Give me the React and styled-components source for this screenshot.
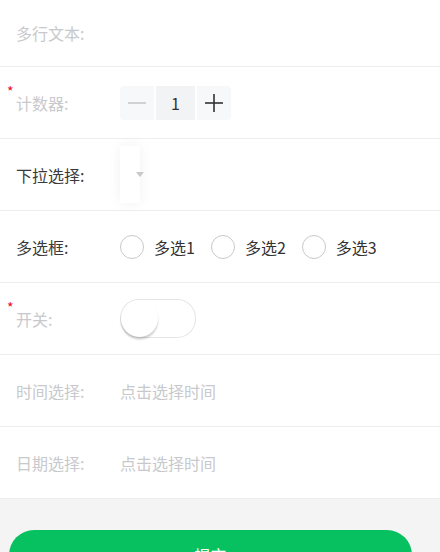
import React, { useState } from 'react';
import styled, { createGlobalStyle } from 'styled-components';

const GlobalStyle = createGlobalStyle`
  body {
    margin: 0;
    background: #f4f4f4;
    font-family: "Noto Sans CJK SC", "Noto Sans", sans-serif;
    -webkit-font-smoothing: antialiased;
  }
`

const Form = styled.div`
  background: #fff;
`

const Row = styled.div`
  position: relative;
  display: flex;
  align-items: center;
  height: ${p => p.height || 72}px;
  padding: 0 16px;
  box-sizing: border-box;
  border-bottom: 1px solid #ebedf0;
`

const Required = styled.span`
  position: absolute;
  left: 7px;
  top: 17px;
  color: #ee0a24;
  font-size: 14px;
  line-height: 14px;
`

const Label = styled.div`
  width: 92px;
  margin-right: 12px;
  flex-shrink: 0;
  font-size: 16px;
  line-height: 24px;
  color: ${p => (p.dark ? '#3a3a3c' : '#c8c9cc')};
`

const Placeholder = styled.div`
  font-size: 16px;
  line-height: 24px;
  color: #c8c9cc;
`

const Stepper = styled.div`
  display: flex;
  align-items: center;
  gap: 2px;
`

const StepButton = styled.button`
  display: flex;
  align-items: center;
  justify-content: center;
  width: 34px;
  height: 34px;
  padding: 0;
  border: none;
  background: #f7f8fa;
  border-radius: ${p => (p.side === 'left' ? '4px 0 0 4px' : '0 4px 4px 0')};
  color: ${p => (p.disabled ? '#c8c9cc' : '#323233')};
  cursor: pointer;
`

const StepValue = styled.div`
  width: 39px;
  height: 34px;
  line-height: 34px;
  text-align: center;
  background: #f2f3f5;
  color: #323233;
  font-size: 16px;
`

const Select = styled.div`
  position: relative;
  width: 20px;
  height: 57px;
  background: #fff;
  box-shadow: 0 0 14px rgba(0, 0, 0, 0.06);
`

const Caret = styled.span`
  position: absolute;
  left: 16px;
  top: 26px;
  width: 0;
  height: 0;
  border-left: 4.5px solid transparent;
  border-right: 4.5px solid transparent;
  border-top: 5px solid #c8c9cc;
`

const CheckGroup = styled.div`
  display: flex;
  align-items: center;
`

const CheckItem = styled.label`
  display: flex;
  align-items: center;
  margin-right: 16px;
  cursor: pointer;
`

const Circle = styled.span`
  width: 24px;
  height: 24px;
  box-sizing: border-box;
  border-radius: 50%;
  border: 1px solid ${p => (p.checked ? '#07c160' : '#c8c9cc')};
  background: ${p => (p.checked ? '#07c160' : '#fff')};
`

const CheckText = styled.span`
  margin-left: 10px;
  font-size: 16px;
  line-height: 24px;
  color: #323233;
`

const Switch = styled.div`
  position: relative;
  width: 74px;
  height: 37px;
  border: 1px solid rgba(0, 0, 0, 0.1);
  border-radius: 19px;
  background: ${p => (p.on ? '#07c160' : '#fff')};
  cursor: pointer;
`

const Knob = styled.span`
  position: absolute;
  top: 0;
  left: ${p => (p.on ? '37px' : '0')};
  width: 37px;
  height: 37px;
  border-radius: 50%;
  background: #fff;
  box-shadow: 0 3px 1px 0 rgba(0, 0, 0, 0.05), 0 2px 2px 0 rgba(0, 0, 0, 0.1),
    0 3px 3px 0 rgba(0, 0, 0, 0.05);
  transition: left 0.2s;
`

const Footer = styled.div`
  padding: 31px 28px 16px 9px;
`

const Submit = styled.button`
  display: block;
  width: 100%;
  height: 50px;
  border: none;
  border-radius: 25px;
  background: #07c160;
  color: #fff;
  font-family: inherit;
  font-size: 16px;
`

const Minus = () => (
  <svg width="18" height="18" viewBox="0 0 18 18">
    <line x1="0" y1="9" x2="18" y2="9" stroke="currentColor" strokeWidth="1.6" />
  </svg>
)

const Plus = () => (
  <svg width="18" height="18" viewBox="0 0 18 18">
    <line x1="0" y1="9" x2="18" y2="9" stroke="currentColor" strokeWidth="1.6" />
    <line x1="9" y1="0" x2="9" y2="18" stroke="currentColor" strokeWidth="1.6" />
  </svg>
)

const options = ['多选1', '多选2', '多选3']

const App = () => {
  const [count, setCount] = useState(1)
  const [checked, setChecked] = useState([])
  const [on, setOn] = useState(false)
  const toggle = o => setChecked(checked.includes(o) ? checked.filter(c => c !== o) : [...checked, o])

  return (
    <>
      <GlobalStyle />
      <Form>
        <Row height={67}>
          <Label>多行文本:</Label>
        </Row>
        <Row>
          <Required>*</Required>
          <Label>计数器:</Label>
          <Stepper>
            <StepButton side="left" disabled={count <= 1} onClick={() => count > 1 && setCount(count - 1)}>
              <Minus />
            </StepButton>
            <StepValue>{count}</StepValue>
            <StepButton side="right" onClick={() => setCount(count + 1)}>
              <Plus />
            </StepButton>
          </Stepper>
        </Row>
        <Row>
          <Label dark>下拉选择:</Label>
          <Select>
            <Caret />
          </Select>
        </Row>
        <Row>
          <Label dark>多选框:</Label>
          <CheckGroup>
            {options.map(o => (
              <CheckItem key={o} onClick={() => toggle(o)}>
                <Circle checked={checked.includes(o)} />
                <CheckText>{o}</CheckText>
              </CheckItem>
            ))}
          </CheckGroup>
        </Row>
        <Row>
          <Required>*</Required>
          <Label>开关:</Label>
          <Switch on={on} onClick={() => setOn(!on)}>
            <Knob on={on} />
          </Switch>
        </Row>
        <Row>
          <Label>时间选择:</Label>
          <Placeholder>点击选择时间</Placeholder>
        </Row>
        <Row>
          <Label>日期选择:</Label>
          <Placeholder>点击选择时间</Placeholder>
        </Row>
      </Form>
      <Footer>
        <Submit>提交</Submit>
      </Footer>
    </>
  )
}

export default App
